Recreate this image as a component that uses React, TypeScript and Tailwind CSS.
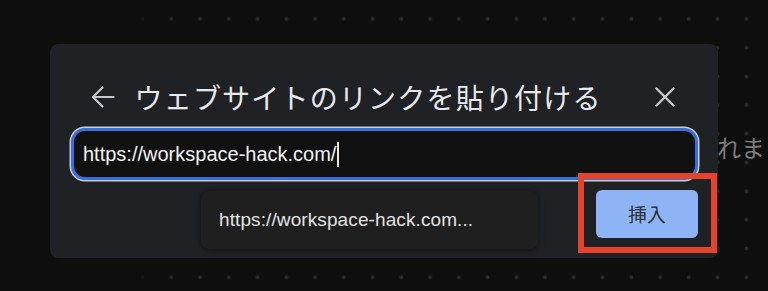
import React from "react";

const ArrowBack = () => (
  <svg width="24" height="24" viewBox="0 0 24 24" fill="none" stroke="#c4c7cf" strokeWidth="2.2" strokeLinecap="round" strokeLinejoin="round">
    <path d="M22.5 12H2" />
    <path d="M11.5 2.5 2 12l9.5 9.5" />
  </svg>
);

const CloseX = () => (
  <svg width="20" height="20" viewBox="0 0 20 20" fill="none" stroke="#c4c7cf" strokeWidth="2.4" strokeLinecap="round">
    <path d="M1.5 1.5 18.5 18.5" />
    <path d="M18.5 1.5 1.5 18.5" />
  </svg>
);

export default function App() {
  return (
    <div
      className="relative w-[768px] h-[291px] overflow-hidden bg-[#0e0e0e] bg-[image:linear-gradient(to_right,#0e0e0e_128px,transparent_178px),radial-gradient(circle,#2a2a2a_1.7px,transparent_2.3px)] bg-[length:100%_100%,28.75px_28.7px] bg-[position:0_0,13.2px_4.7px]"
      style={{ fontFamily: '"Liberation Sans", "Noto Sans CJK JP", sans-serif' }}
    >
      <span
        className="absolute left-[693px] top-[133px] text-[24px] leading-[28px] text-[#7b7b7b] whitespace-nowrap"
        style={{ fontFamily: '"Noto Sans CJK JP", sans-serif' }}
      >
        されま
      </span>

      <div className="relative ml-[49.5px] mt-[44px] w-[668.5px] h-[214px] rounded-[8px] bg-[#202125] flex flex-col">
        <div className="mt-[33px] h-[40px] flex items-center pl-[41px] pr-[43px]">
          <ArrowBack />
          <span
            className="ml-[20px] text-[28px] leading-[40px] tracking-[1.2px] text-[#e8eaed] whitespace-nowrap"
            style={{ fontFamily: '"Noto Sans CJK JP", sans-serif' }}
          >
            ウェブサイトのリンクを貼り付ける
          </span>
          <div className="ml-auto">
            <CloseX />
          </div>
        </div>

        <div className="mt-[11px] ml-[21.5px] mr-[20px] h-[52px] rounded-[14px] border-[3px] border-[#3a6fd8] shadow-[0_0_0_1.5px_#c9ccd1] bg-[#111112] flex items-center pl-[9px]">
          <span className="text-[20px] leading-[26px] text-[#f1f3f4] whitespace-nowrap">
            https://workspace-hack.com/
          </span>
          <span className="ml-[1px] w-[1.5px] h-[25px] bg-[#e8eaed]" />
        </div>

        <div className="flex items-start pr-[20px]">
          <div className="ml-[151.5px] mt-[11px] w-[337px] h-[58px] rounded-[8px] bg-[#1f1f20] shadow-[0_1px_6px_rgba(0,0,0,0.45)] flex items-center pl-[18px]">
            <span className="text-[19px] leading-[24px] text-[#e3e3e3] whitespace-nowrap tracking-[0.1px]">
              https://workspace-hack.com...
            </span>
          </div>
          <button
            className="ml-auto mt-[10px] w-[102px] h-[48px] rounded-[6px] bg-[#8fb4f6] text-[#2e3137] text-[19px] leading-[24px] flex items-center justify-center"
            style={{ fontFamily: '"Noto Sans CJK JP", sans-serif' }}
          >
            挿入
          </button>
        </div>
      </div>

      <div className="absolute left-[578px] top-[173px] w-[139px] h-[80px] border-[6.5px] border-[#e5432c]" />
    </div>
  );
}
